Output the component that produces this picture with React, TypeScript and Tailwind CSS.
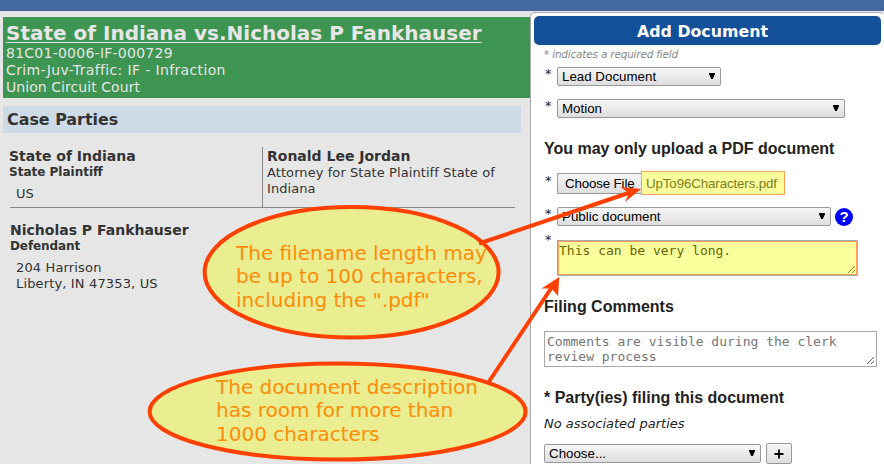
import type { ReactNode } from "react";

const sans = "font-['DejaVu_Sans',Verdana,sans-serif]";
const arial = "font-['Liberation_Sans',Arial,sans-serif]";
const mono = "font-['DejaVu_Sans_Mono',monospace]";

function Star() {
  return <span className={`${sans} block w-[13px] shrink-0 pl-px text-[13px] leading-[14px] text-[#222]`}>*</span>;
}

function Select({ label, width }: { label: string; width: string }) {
  return (
    <div
      className={`${arial} ${width} flex h-[19px] shrink-0 items-center justify-between rounded-[2px] border border-[#999] bg-linear-to-b from-[#f6f6f6] to-[#dedede] pr-[5px] pl-1 text-[13.33px] leading-[17px] text-black`}
    >
      <span>{label}</span>
      <svg className="mb-[2px]" width="6" height="6" viewBox="0 0 6 6">
        <path d="M0 0h6v1L3.8 6H2.2L0 1z" fill="#000" />
      </svg>
    </div>
  );
}

function Grip({ color }: { color: string }) {
  return (
    <svg className="absolute right-[2px] bottom-[2px]" width="7" height="7" viewBox="0 0 7 7">
      <path d="M0 7L7 0M4 7L7 4" stroke={color} strokeWidth="0.9" />
    </svg>
  );
}

function Heading({ children, className }: { children: ReactNode; className: string }) {
  return <h3 className={`${arial} ${className} h-5 text-[16px] leading-[22px] font-bold whitespace-nowrap text-[#222]`}>{children}</h3>;
}

function PartyName({ children }: { children: ReactNode }) {
  return <h4 className="h-[18px] text-[14px] leading-[18px] font-bold">{children}</h4>;
}

function CasePanel() {
  return (
    <section className={`${sans} w-[530px] shrink-0 pt-[6px] pl-[3px] text-[#333]`}>
      <header className="h-[81px] bg-[#3d9551] pt-[6px] pl-[3px] text-[14px] leading-[17px] text-[#e6e6e6]">
        <h1 className="h-[22px] w-max text-[20px] leading-[21px] font-bold whitespace-nowrap underline decoration-1 underline-offset-[2px]">
          State of Indiana vs.Nicholas P Fankhauser
        </h1>
        <p className="tracking-[0.25px]">81C01-0006-IF-000729</p>
        <p className="tracking-[0.36px]">Crim-Juv-Traffic: IF - Infraction</p>
        <p className="tracking-[0.06px]">Union Circuit Court</p>
      </header>
      <h2 className="mt-2 h-[27px] w-[518px] bg-[#cedae6] pl-1 text-[15.9px] leading-[28px] font-bold">Case Parties</h2>
      <div className="mt-[14px] ml-[7px] flex h-[61px] w-[505px] border-b border-[#888]">
        <div className="-ml-px h-[60px] w-[254px] border-r border-[#888]">
          <PartyName>State of Indiana</PartyName>
          <p className="text-[12px] leading-[14px] font-bold">State Plaintiff</p>
          <p className="mt-[7px] ml-[7px] text-[13px] leading-4">US</p>
        </div>
        <div className="pl-1">
          <PartyName>Ronald Lee Jordan</PartyName>
          <p className="text-[13px] leading-4 tracking-[0.08px] whitespace-nowrap">Attorney for State Plaintiff State of<br />Indiana</p>
        </div>
      </div>
      <div className="mt-[13px] ml-[7px]">
        <PartyName>Nicholas P Fankhauser</PartyName>
        <p className="text-[12px] leading-[14px] font-bold tracking-[-0.1px]">Defendant</p>
        <p className="mt-[7px] ml-[6px] text-[13px] leading-4 tracking-[0.15px]">204 Harrison<br />Liberty, IN 47353, US</p>
      </div>
    </section>
  );
}

function DocumentPanel() {
  return (
    <section className="mt-px h-[460px] w-[354px] shrink-0 rounded-t-[5px] border border-b-0 border-[#aaa] border-r-transparent bg-white">
      <h2 className={`${sans} mt-[3px] ml-[3px] h-[29px] w-[347px] rounded-[5px] bg-[#144f99] pr-[10px] text-center text-[15.8px] leading-[31px] font-bold text-white`}>
        Add Document
      </h2>
      <div className="pl-[13px]">
        <p className={`${sans} h-[22px] text-[10.5px] leading-[18px] tracking-[-0.2px] whitespace-nowrap text-[#888] italic`}>* indicates a required field</p>
        <div className="flex"><Star /><Select label="Lead Document" width="w-[164px]" /></div>
        <div className="mt-[13px] flex"><Star /><Select label="Motion" width="w-[288px]" /></div>
        <Heading className="mt-5">You may only upload a PDF document</Heading>
        <div className="mt-[13px] flex h-[24px]">
          <div className="pt-[3px]"><Star /></div>
          <div className={`${arial} mt-[2px] h-[21px] w-[84px] shrink-0 rounded-l-[2px] border border-r-0 border-[#999] bg-linear-to-b from-[#f6f6f6] to-[#dedede] pl-[7px] text-[13.33px] leading-[20px] tracking-[-0.15px] whitespace-nowrap text-black`}>Choose File</div>
          <div className={`${arial} h-[24px] w-[144px] border border-[#ff9f60] bg-[#fbff9c] pl-1 text-[13.33px] leading-[23px] tracking-[-0.12px] text-[#7d7d1c]`}>UpTo96Characters.pdf</div>
        </div>
        <div className="mt-[12px] flex">
          <Star />
          <Select label="Public document" width="w-[274px]" />
          <span className={`${arial} mt-px ml-1 h-[18px] w-[18px] rounded-full bg-[#0000ff] text-center text-[15px] leading-[17px] font-bold text-white`}>?</span>
        </div>
        <div className="mt-[6px] flex">
          <div className="pt-px"><Star /></div>
          <div className={`${mono} relative mt-[8px] h-[36px] w-[301px] border border-r-[#ff9f60] border-[#a9a9a9] bg-[#fbff9c] pl-px text-[13px] leading-[15px] text-[#666600] inset-shadow-[0_0_0_1px_#ff9f60]`}>
            <div className="pt-[2px]">This can be very long.</div>
            <Grip color="#77772a" />
          </div>
        </div>
        <Heading className="mt-5">Filing Comments</Heading>
        <div className={`${mono} relative mt-[15px] h-[36px] w-[333px] border border-[#a9a9a9] pt-[2px] pl-[2px] text-[13px] leading-[15px] whitespace-nowrap text-[#757575]`}>
          Comments are visible during the clerk<br />review process
          <Grip color="#555" />
        </div>
        <Heading className="mt-5">* Party(ies) filing this document</Heading>
        <p className={`${sans} mt-[7px] h-[18px] text-[13px] leading-5 text-[#222] italic`}>No associated parties</p>
        <div className="mt-[11px] flex items-center">
          <Select label="Choose..." width="w-[217px]" />
          <div className="ml-[5px] flex h-[21px] w-[26px] items-center justify-center rounded-[2px] border border-[#999] bg-linear-to-b from-[#f6f6f6] to-[#dedede]">
            <svg width="10" height="10" viewBox="0 0 10 10"><path d="M5 0.5v9M0.5 5h9" stroke="#000" strokeWidth="1.8" /></svg>
          </div>
        </div>
      </div>
    </section>
  );
}

function Annotations() {
  return (
    <div className={`${sans} pointer-events-none absolute inset-0 text-[20px] leading-[23.4px] whitespace-nowrap text-[#ff8c0a]`}>
      <svg className="absolute inset-0" width="884" height="464" viewBox="0 0 884 464">
        <g fill="#ebee90" stroke="#ff4000" strokeWidth="4">
          <ellipse cx="351.6" cy="272.3" rx="147" ry="65.2" />
          <ellipse cx="337.6" cy="411.6" rx="188" ry="48" />
        </g>
        <path d="M479 243.5L630 192.5M488 383L552 287" fill="none" stroke="#ff4000" strokeWidth="4" />
        <path d="M641 189L620.5 187L629 193L625 202ZM559.3 277L541.5 288.5L551.5 288.5L558 296Z" fill="#ff4000" />
      </svg>
      <p className="absolute top-[242px] left-[236px]">The filename length may<br />be up to 100 characters,<br />including the ".pdf"</p>
      <p className="absolute top-[376px] left-[216px]">The document description<br />has room for more than<br />1000 characters</p>
    </div>
  );
}

export default function App() {
  return (
    <main className="relative h-[464px] w-[884px] overflow-hidden bg-[#e6e6e6]">
      <div className="h-[11px] bg-[#426a9e]" />
      <div className="flex">
        <CasePanel />
        <DocumentPanel />
      </div>
      <Annotations />
    </main>
  );
}
